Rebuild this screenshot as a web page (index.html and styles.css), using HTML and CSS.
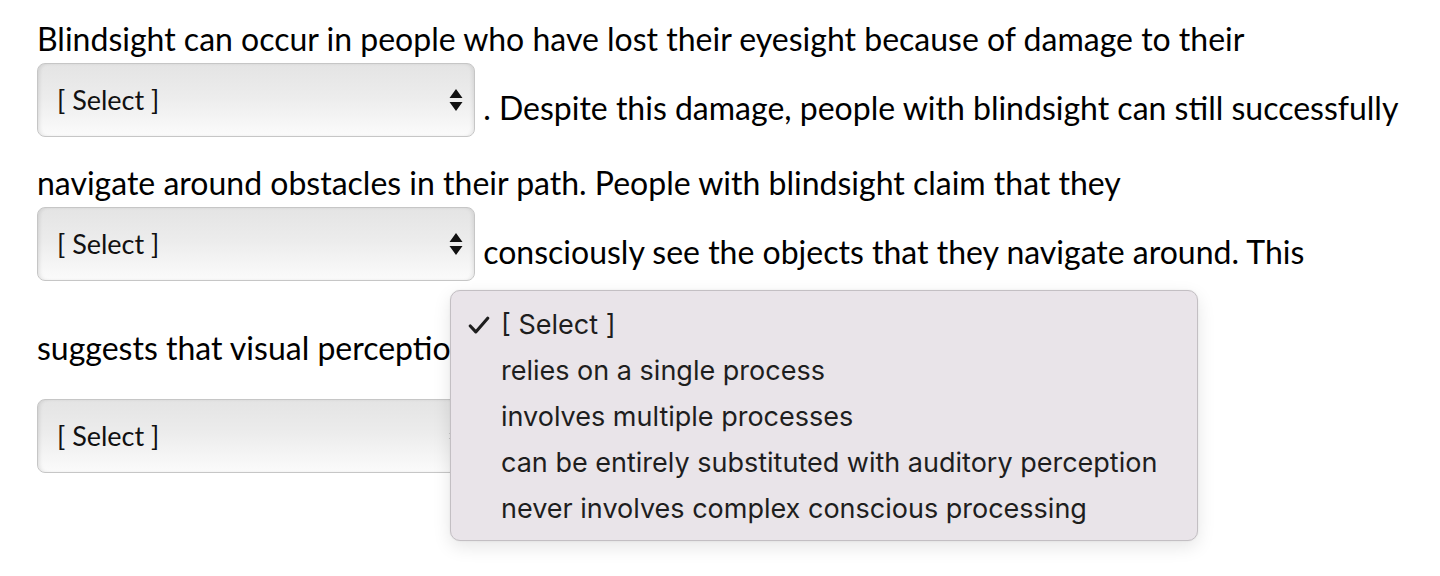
FILE: index.html
```html
<!DOCTYPE html>
<html lang="en">
<head>
<meta charset="utf-8">
<title>Blindsight</title>
<link rel="stylesheet" href="styles.css">
</head>
<body>
<div class="page">
  <p class="question">Blindsight can occur in people who have lost their eyesight because of damage to their
    <span class="select"><span class="select-label">[ Select ]</span><svg class="select-arrow" viewBox="0 0 14 24" aria-hidden="true"><path d="M7 1 L13.5 10 H0.5 Z M0.5 14 H13.5 L7 23 Z"/></svg></span> . Despite this damage, people with blindsight can still successfully navigate around obstacles in their path. People with blindsight claim that they
    <span class="select"><span class="select-label">[ Select ]</span><svg class="select-arrow" viewBox="0 0 14 24" aria-hidden="true"><path d="M7 1 L13.5 10 H0.5 Z M0.5 14 H13.5 L7 23 Z"/></svg></span> consciously see the objects that they navigate around. This suggests that visual perception
    <span class="select"><span class="select-label">[ Select ]</span><svg class="select-arrow" viewBox="0 0 14 24" aria-hidden="true"><path d="M7 1 L13.5 10 H0.5 Z M0.5 14 H13.5 L7 23 Z"/></svg></span><br>
    <span class="select"><span class="select-label">[ Select ]</span><svg class="select-arrow" viewBox="0 0 14 24" aria-hidden="true"><path d="M7 1 L13.5 10 H0.5 Z M0.5 14 H13.5 L7 23 Z"/></svg></span>.
  </p>

  <ul class="menu" role="listbox">
    <li class="menu-item is-checked"><svg class="check" viewBox="0 0 24 20" aria-hidden="true"><path d="M2.5 10.5 L8.5 17 L21.5 2"/></svg>[ Select ]</li>
    <li class="menu-item">relies on a single process</li>
    <li class="menu-item">involves multiple processes</li>
    <li class="menu-item">can be entirely substituted with auditory perception</li>
    <li class="menu-item">never involves complex conscious processing</li>
  </ul>
</div>
</body>
</html>
```

FILE: styles.css
```css
html, body {
  margin: 0;
  padding: 0;
  background: #ffffff;
}

.page {
  position: relative;
  width: 1440px;
  height: 576px;
  overflow: hidden;
  box-sizing: border-box;
  padding: 15px 28px 0 37px;
}

.question {
  margin: 0;
  font-family: Lato, "Open Sans", sans-serif;
  font-size: 32px;
  line-height: 48px;
  color: #000000;
}

.select {
  display: inline-block;
  box-sizing: border-box;
  width: 438px;
  height: 74px;
  margin: 0 0 22px 0;
  padding: 0 11px 0 19px;
  overflow: hidden;
  vertical-align: -39px;
  border: 1px solid #c6c6c6;
  border-radius: 8px;
  background: linear-gradient(to bottom, #e4e4e4 0%, #ececec 45%, #fbfbfb 100%);
  box-shadow: inset 3px 0 4px -2px rgba(0, 0, 0, 0.12), inset -3px 0 4px -2px rgba(0, 0, 0, 0.10);
  line-height: 72px;
  white-space: nowrap;
}

.select-label {
  display: inline-block;
  font-family: Lato, "Open Sans", sans-serif;
  font-size: 27px;
  color: #111111;
  line-height: 1;
  vertical-align: 2px;
}

.select-arrow {
  float: right;
  width: 14px;
  height: 24px;
  margin-top: 24px;
  fill: #111111;
}

.menu {
  position: absolute;
  left: 450px;
  top: 290px;
  width: 748px;
  height: 251px;
  box-sizing: border-box;
  margin: 0;
  padding: 11px 0 0 50px;
  list-style: none;
  background: #e9e4e9;
  border: 1px solid #c3bfc3;
  border-radius: 10px;
  box-shadow: 0 6px 18px rgba(0, 0, 0, 0.10), 0 0 2px rgba(0, 0, 0, 0.08);
  font-family: Inter, "Liberation Sans", sans-serif;
  font-size: 27px;
  line-height: 46px;
  color: #1e1e1e;
}

.menu-item {
  position: relative;
  white-space: nowrap;
}

.check {
  position: absolute;
  left: -33px;
  top: 14px;
  width: 22px;
  height: 19px;
  fill: none;
  stroke: #1e1e1e;
  stroke-width: 3.4;
  stroke-linecap: round;
  stroke-linejoin: round;
}
```
